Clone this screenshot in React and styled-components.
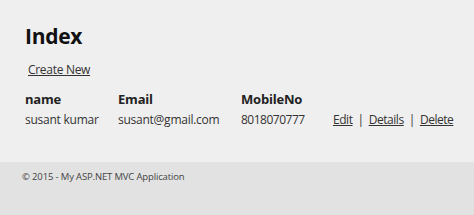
import React from "react";
import styled, { createGlobalStyle } from "styled-components";

const GlobalStyle = createGlobalStyle`
  html, body {
    margin: 0;
    padding: 0;
    background: #efefef;
  }
  body {
    font-family: "Open Sans", "Noto Sans", sans-serif;
    color: #333;
  }
`;

const Page = styled.div`
  width: 474px;
  height: 215px;
  display: flex;
  flex-direction: column;
  background: #efefef;
  overflow: hidden;
`;

const Body = styled.div`
  flex: 1;
  padding: 22px 25px 0;
`;

const Title = styled.h2`
  margin: 0;
  font-size: 21px;
  font-weight: 700;
  color: #111;
  line-height: 28px;
  letter-spacing: -0.3px;
`;

const Link = styled.a`
  color: #333;
  font-size: 12px;
  text-decoration: underline;
  cursor: pointer;
`;

const CreateRow = styled.p`
  margin: 10px 0 0 3px;
  line-height: 16px;
  letter-spacing: -0.3px;
`;

const Table = styled.table`
  width: 438px;
  border-collapse: collapse;
  table-layout: fixed;
  margin-top: 12px;
`;

const Th = styled.th`
  text-align: left;
  padding: 0;
  width: ${({ $w }) => $w}px;
  font-size: 13px;
  font-weight: 700;
  color: #222;
  line-height: 18px;
  letter-spacing: -0.2px;
`;

const Td = styled.td`
  padding: 4px 0 0;
  font-size: 12px;
  color: #333;
  line-height: 16px;
  letter-spacing: ${({ $ls }) => $ls || "-0.25px"};
  white-space: nowrap;
`;

const Sep = styled.span`
  margin: 0 5px;
  font-size: 12px;
`;

const Footer = styled.footer`
  height: 53px;
  background: #e2e2e2;
  padding: 8px 22px 0;
  box-sizing: border-box;
  font-size: 9.5px;
  color: #444;
  letter-spacing: -0.15px;
`;

export default function App() {
  return (
    <Page>
      <GlobalStyle />
      <Body>
        <Title>Index</Title>
        <CreateRow>
          <Link>Create New</Link>
        </CreateRow>
        <Table>
          <thead>
            <tr>
              <Th $w={93}>name</Th>
              <Th $w={123}>Email</Th>
              <Th $w={92}>MobileNo</Th>
              <Th $w={130} />
            </tr>
          </thead>
          <tbody>
            <tr>
              <Td>susant kumar</Td>
              <Td>susant@gmail.com</Td>
              <Td $ls="-0.5px">8018070777</Td>
              <Td $ls="-0.45px">
                <Link>Edit</Link>
                <Sep>|</Sep>
                <Link>Details</Link>
                <Sep>|</Sep>
                <Link>Delete</Link>
              </Td>
            </tr>
          </tbody>
        </Table>
      </Body>
      <Footer>© 2015 - My ASP.NET MVC Application</Footer>
    </Page>
  );
}
